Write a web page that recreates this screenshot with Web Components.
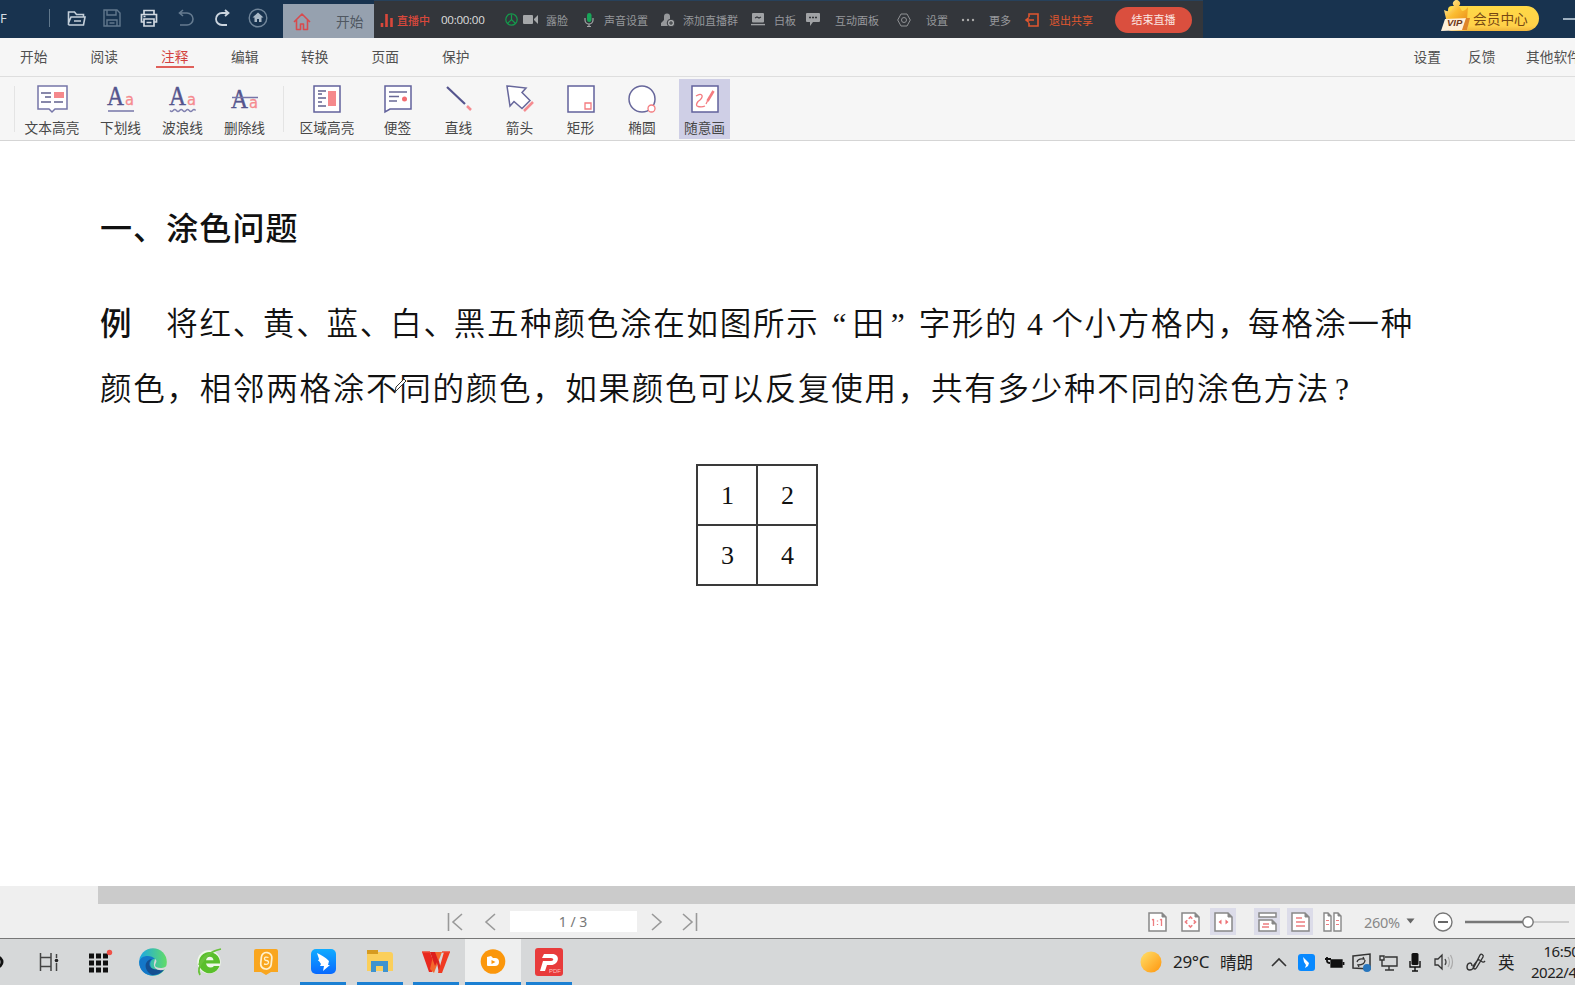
<!DOCTYPE html>
<html lang="zh-CN">
<head>
<meta charset="utf-8">
<title>PDF</title>
<style>
body{margin:0;width:1575px;height:985px;overflow:hidden;background:#fff;font-family:"Noto Sans CJK SC","Noto Sans",sans-serif}
</style>
</head>
<body>
<pdf-app></pdf-app>
<script>
const svg=(w,h,body,extra='')=>`<svg width="${w}" height="${h}" viewBox="0 0 ${w} ${h}" fill="none" ${extra}>${body}</svg>`;
const define=(name,css,html)=>customElements.define(name,class extends HTMLElement{
  constructor(){super();this.attachShadow({mode:'open'}).innerHTML=`<style>*{box-sizing:border-box}svg{display:block;flex:none;overflow:visible}${css}</style>${html}`;}
});

// A grid row whose columns begin at the listed stops.
customElements.define('track-row',class extends HTMLElement{
  constructor(){super();this.attachShadow({mode:'open'}).innerHTML='<style>:host{display:grid;align-items:center;white-space:nowrap;box-sizing:border-box}::slotted(*){min-width:0}</style><slot></slot>';}
  connectedCallback(){
    const s=this.getAttribute('stops').split(' ').map(Number);
    this.style.paddingLeft=s[0]+'px';
    this.style.gridTemplateColumns=s.slice(1).map((v,i)=>(v-s[i])+'px').join(' ')+' 1fr';
  }
});

define('live-bar',`
:host{display:block;width:829px;height:38px;background:#33363b;border-top:1px solid #27415b;color:#96989b;font-size:11px;line-height:16px;overflow:hidden}
track-row{height:37px}
.red{color:#d9483b;font-weight:500}.time{font:11.6px/16px "Open Sans","Noto Sans",sans-serif;color:#dedede;letter-spacing:-.3px}.exit{color:#e0562f}
.end{width:77px;height:26px;border-radius:13px;background:#da4f3e;color:#fbe6e2;text-align:center;line-height:25px}
`,`<track-row stops="6 23 67 131 149 172 210 230 286 309 377 400 432 461 523 552 587 615 651 675 741">
${svg(14,14,'<path d="M2 14v-4M6.5 14V1M11.5 14V5" stroke="#d9483b" stroke-width="2.6"/>')}
<span class="red">直播中</span><span class="time">00:00:00</span>
${svg(13,13,'<circle cx="6.5" cy="6.5" r="5.7" stroke="#159a4c" stroke-width="1.2"/><path d="M6.5 1.500v5M2.5 10.500l4-4 4 4" stroke="#159a4c" stroke-width="1.200"/>')}
${svg(16,11,'<rect y="1" width="10" height="9" rx="1" fill="#a5a7a9"/><path d="M11 5l4-4v9l-4-4z" fill="#a5a7a9"/>')}
<span>露脸</span>
${svg(10,14,'<rect x="3" y="0" width="4.5" height="9" rx="2.2" fill="#18a559"/><path d="M1 5v2a4 4 0 0 0 8 0V5M5 11v3M3 13.5h4" stroke="#a3a5a7" stroke-width="1.2"/>')}
<span>声音设置</span>
${svg(15,14,'<path d="M4 7V3.500a3 3 0 0 1 6 0V7L8 9v4H1v-3z" fill="#96989b"/><circle cx="11" cy="10" r="3.800" fill="#a5a7a9" stroke="#33363b"/><path d="M9 10h4M11 8v4" stroke="#33363b"/>')}
<span>添加直播群</span>
${svg(15,13,'<rect x="1" width="12" height="9.500" rx="1" fill="#a0a2a5"/><path d="M4 5l2-1 2 1 2-1" stroke="#33363b" stroke-width="1.200"/><path d="M0 11.600h14" stroke="#a0a2a5" stroke-width="1.400"/>')}
<span>白板</span>
${svg(14,13,'<path d="M1 0h12q1 0 1 1v7q0 1-1 1H7l-3 4V9H1q-1 0-1-1V1q0-1 1-1z" fill="#a0a2a5"/><path d="M3 4.500h2M6 4.500h2M9 4.500h2" stroke="#33363b" stroke-width="1.500"/>')}
<span>互动面板</span>
${svg(14,14,'<path d="M4 1h6l3.300 6L10 13H4L.700 7z" stroke="#909295" stroke-linejoin="round"/><circle cx="7" cy="7" r="2.500" stroke="#909295"/>')}
<span>设置</span>
${svg(14,4,'<circle cx="2" cy="2" r="1.200" fill="#aaa"/><circle cx="7" cy="2" r="1.200" fill="#aaa"/><circle cx="12" cy="2" r="1.200" fill="#aaa"/>')}
<span>更多</span>
${svg(14,14,'<path d="M4 4V1h9v12H4v-3M9 7H1M4 4.500L1 7l3 2.500" stroke="#e0562f" stroke-width="1.600"/>')}
<span class="exit">退出共享</span><div class="end">结束直播</div>
</track-row>`);

define('vip-badge',`
:host{display:flex;width:99px;height:34px;position:relative;align-items:flex-start}
.pill{margin:6px 0 0 7px;width:91px;height:25px;border-radius:4px 13px 13px 4px;background:linear-gradient(#ffd946,#ffd149 80%,#efb43b);color:#764713;font-size:13.700px;line-height:24px;padding-left:25px;white-space:nowrap}
.crown{position:absolute;left:0;top:0}
.tag{position:absolute;left:6px;top:17px;font:italic bold 9.500px/12px "Liberation Sans",sans-serif;color:#6d3517}
`,`<div class="pill">会员中心</div><svg class="crown" width="30" height="32" viewBox="0 0 30 32"><defs><linearGradient id="g" x2="1" y2="1"><stop stop-color="#fff4bd"/><stop offset=".5" stop-color="#fbbd32"/><stop offset="1" stop-color="#e98b18"/></linearGradient></defs><path d="M3 10q4 2 7 1l3-5a3.500 3.500 0 1 1 5 0l3 5q3 0 6-4l-1 13-2 3H6z" fill="url(#g)"/><path d="M4 19l24-1-2 12-26 1z" fill="#fff0d8"/><path d="M25 18h4l-3 12h-5z" fill="#df8428"/></svg><span class="tag">VIP</span>`);

define('title-bar',`
:host{display:grid;grid-template-columns:283px 91px 829px 238px 99px 35px;height:38px;background:#18334f;overflow:hidden;align-items:start}
.quick{height:36px}.f{font:13px/16px "Noto Sans",sans-serif;color:#d7dee5}
.tab{display:flex;align-items:center;height:34px;margin-top:4px;background:#96a1af;padding-left:10px;color:#505862;font-size:13.700px;line-height:18px;gap:25px;white-space:nowrap}
.min{width:12px;height:1.500px;background:#9eb0bf;margin:18px 0 0 23px}
`,`<track-row class="quick" stops="0 49 67 103 140 178 214 248">
<span class="f">F</span>${svg(1,18,'<path d="M.500 0v18" stroke="#60788c"/>')}
${svg(19,18,'<path d="M1.500 16V3h6l2 2.500h7V8M1.500 16h15L18 8H4L1.500 14M7 12h7" stroke="#c3cfda" stroke-width="1.600"/>')}
${svg(18,18,'<path d="M1 1h13l3 3v13H1zM4 1v5h9V1M4 17v-6h10v6M6.500 14h5" stroke="#61788d" stroke-width="1.400"/>')}
${svg(18,18,'<path d="M4 5V1.500h10V5M4 13H1.500V5.500h15V13H14M4 10h10v7H4zM6.500 13.500h5M3.500 7.500h2" stroke="#d1d9e1" stroke-width="1.700"/>')}
${svg(17,18,'<path d="M5 1L1.500 4 5 7M2 4h7a5.500 5.500 0 0 1 0 12H2" stroke="#657b90" stroke-width="1.600"/>')}
${svg(17,18,'<path d="M11 1l3.500 3L11 7M14 4H8a5.500 5.500 0 0 0 0 12h5" stroke="#cbd5df" stroke-width="1.800"/>')}
${svg(20,20,'<circle cx="10" cy="10" r="8.800" stroke="#71869a" stroke-width="1.400"/><path d="M10 4.500L4.500 9.500h2V14h2.500v-3h2v3h2.500V9.500h2z" fill="#a9b8c6"/>')}
</track-row>
<div class="tab">${svg(18,19,'<path d="M1 10l8-8 8 8M3.500 8v9.500h4V12h3v5.500h4V8" stroke="#d84a4d" stroke-width="1.600" stroke-linejoin="round"/>')}<span>开始</span></div>
<live-bar></live-bar><i></i><vip-badge></vip-badge><div class="min"></div>`);

define('menu-bar',`
:host{display:block;height:39px;background:#f6f6f6;border-bottom:1px solid #dedede;color:#505050;font-size:13.700px;line-height:20px;overflow:hidden}
track-row{height:36px}
.on{color:#d34240;width:38px;padding-left:5px;border-bottom:2px solid #e0605a;line-height:19px;margin-top:2px}
`,`<track-row stops="20 90.500 156 231 301 371.500 442 1413.500 1468 1526"><span>开始</span><span>阅读</span><span class="on">注释</span><span>编辑</span><span>转换</span><span>页面</span><span>保护</span><span>设置</span><span>反馈</span><span>其他软件</span></track-row>`);

define('tool-button',`
:host{display:flex;flex-direction:column;align-items:center;width:51px;height:60px;padding-top:6px;box-sizing:border-box;font-size:13.700px;line-height:18px;color:#474747}
:host([active]){background:#cfcfe6}
:host([wide]){width:60px}
.i{height:33px;display:flex;align-items:flex-start}
`,`<div class="i"><slot name="icon"></slot></div><slot></slot>`);

define('tool-ribbon',`
:host{display:block;height:64px;box-sizing:border-box;background:#f6f6f6;border-bottom:1.500px solid #d5d5d5;overflow:hidden}
track-row{height:62px;padding-top:2px}.sep{height:46px;border-left:1px solid #e4e4e4}
.a{font-family:"Liberation Serif",serif;font-size:28px;fill:#55558d;stroke:#55558d;stroke-width:.4px}.b{font-family:"DejaVu Sans",sans-serif;font-size:16px;fill:#f58b90;stroke:#f58b90;stroke-width:.3px}
`,`<track-row stops="14 22 95 157 219 283 297 372 433 494 555 616.500 679">
<div class="sep"></div>
<tool-button wide>${svg(31,28,'<path d="M1 1h29v23H18l-3 3-3-3H1z" fill="#fff" stroke="#7676a8" stroke-width="1.500"/><path d="M4 8h10M8 12h6M4 17h10M17 17h9" stroke="#62628f" stroke-width="1.300"/><path d="M17 7h10v6H17z" fill="#f5898c"/>','slot="icon"')}文本高亮</tool-button>
<tool-button>${svg(28,28,'<text class="a" x="0" y="20" textLength="17" lengthAdjust="spacingAndGlyphs">A</text><text class="b" x="18" y="20" textLength="9" lengthAdjust="spacingAndGlyphs">a</text><path d="M1 26h26" stroke="#7676a8" stroke-width="1.500"/>','slot="icon"')}下划线</tool-button>
<tool-button>${svg(28,28,'<text class="a" x="0" y="20" textLength="17" lengthAdjust="spacingAndGlyphs">A</text><text class="b" x="18" y="20" textLength="9" lengthAdjust="spacingAndGlyphs">a</text><path d="M1 25.500q1.600 2 3.200 0t3.200 0 3.200 0 3.200 0 3.200 0 3.200 0 3.200 0 3.200 0" stroke="#8282b0" stroke-width="1.300"/>','slot="icon"')}波浪线</tool-button>
<tool-button>${svg(28,28,'<text class="a" x="0" y="23" textLength="17" lengthAdjust="spacingAndGlyphs">A</text><text class="b" x="18" y="23" textLength="9" lengthAdjust="spacingAndGlyphs">a</text><path d="M1 12.500h26" stroke="#7575a8" stroke-width="1.500"/>','slot="icon"')}删除线</tool-button>
<div class="sep"></div>
<tool-button wide>${svg(28,28,'<path d="M1 1h26v26H1z" fill="#fff" stroke="#62629c" stroke-width="1.500"/><path d="M5 6h8M5 9h4M5 13h8M5 17h4M5 21h8" stroke="#62628f" stroke-width="1.300"/><path d="M15 6h8v15h-8z" fill="#f5898c"/>','slot="icon"')}区域高亮</tool-button>
<tool-button>${svg(28,28,'<path d="M1 1h26v23H6l-5 3z" fill="#fff" stroke="#62629c" stroke-width="1.500"/><path d="M5 7h18M5 11.500h10M5 16h8" stroke="#696996" stroke-width="1.400"/><circle cx="20.500" cy="14" r="2.500" fill="#f36c70"/>','slot="icon"')}便签</tool-button>
<tool-button>${svg(28,28,'<path d="M2 2l18 17" stroke="#55558e" stroke-width="2.200"/><path d="M22 21l4 4" stroke="#f58b90" stroke-width="2.500"/>','slot="icon"')}直线</tool-button>
<tool-button>${svg(28,28,'<path d="M1 1l19 2-4 4.500 8 8-8 8-8-7-4 4.500z" fill="#fff" stroke="#67679b" stroke-width="1.500"/><path d="M18 26l9-9" stroke="#f58b90" stroke-width="2.500"/>','slot="icon"')}箭头</tool-button>
<tool-button>${svg(28,28,'<path d="M1 1h26v26H1z" fill="#fff" stroke="#62629c" stroke-width="1.500"/><path d="M18 18h6v6h-6z" stroke="#f47b7f" stroke-width="1.300"/>','slot="icon"')}矩形</tool-button>
<tool-button>${svg(28,28,'<circle cx="14" cy="14" r="13" fill="#fff" stroke="#67679b" stroke-width="1.500"/><circle cx="23.500" cy="23.500" r="3.500" fill="#fff" stroke="#f47b7f" stroke-width="1.300"/>','slot="icon"')}椭圆</tool-button>
<tool-button active>${svg(28,28,'<path d="M1 1h26v26H1z" fill="#fff" stroke="#62629c" stroke-width="1.500"/><path d="M5 11q5-3 6-.500t-4 6q-3 4 0 5 4 1 7-.500" stroke="#f47b80" stroke-width="1.300"/><path d="M22.500 6l-6 10" stroke="#f47b80" stroke-width="2.600"/><path d="M16.500 16l-1.500 3" stroke="#f47b80" stroke-width="1.200"/>','slot="icon"')}随意画</tool-button>
</track-row>`);

define('color-grid',`
:host{display:grid;grid-template:58px 58px/58px 58px;gap:2px;width:122px;height:122px;padding:2px;box-sizing:border-box;background:#3a3a3a;margin:45px 0 0 696px;font:26px/1 "Liberation Serif",serif;color:#111}
div{background:#fff;display:grid;place-items:center;padding:3px 0 0 1px}
`,`<div>1</div><div>2</div><div>3</div><div>4</div>`);

define('doc-page',`
:host{display:block;height:745px;box-sizing:border-box;background:#fff;padding-top:52px;color:#111;overflow:hidden;white-space:nowrap}
h1{margin:0 0 29.500px 100px;font-size:32px;line-height:66px;font-weight:500;letter-spacing:1.100px}
p{margin:0 0 0 100px;font-size:31.500px;line-height:65px;font-weight:350;letter-spacing:1.740px;height:65px}
b{font-weight:500;margin-right:33px}.c{letter-spacing:-1.200px}
.q{display:inline-block;width:33px;font-family:"Liberation Serif",serif;letter-spacing:0;line-height:1}
.l{text-align:right;padding-right:6px}.r{padding-left:5px}.m{text-align:center}
.pen{position:relative}.pen svg{position:absolute;left:-7px;top:14px}
`,`<h1>一、涂色问题</h1>
<p><b>例</b>将红<span class="c">、</span>黄<span class="c">、</span>蓝<span class="c">、</span>白<span class="c">、</span>黑五种颜色涂在如图所示<span class="q l">“</span>田<span class="q r">”</span>字形的<span class="q m">4</span>个小方格内<span class="c">&#xff0c;</span>每格涂一种</p>
<p>颜色&#xff0c;相邻两格涂不<span class="pen">${svg(16,18,'<path d="M3 15l1-5 8-8 2 2-8 8z" fill="#fff" stroke="#333"/>')}</span>同的颜色&#xff0c;如果颜色可以反复使用&#xff0c;共有多少种不同的涂色方法<span class="q r">?</span></p>
<color-grid></color-grid>`);

define('page-nav',`
:host{display:block;height:53px;box-sizing:border-box;background:#efefef;border-bottom:1.500px solid #777;overflow:hidden}
.scroll{height:18px;margin-left:98px;background:#cbcbcb}
track-row{height:34px;padding-top:1px}
.page{width:127px;height:21px;background:#fff;text-align:center;font:14px/21px "Noto Sans",sans-serif;color:#777}
.on{width:26px;height:27px;background:#dcdce9;display:grid;place-items:center}
.zoom{font:14.500px/20px "Noto Sans",sans-serif;color:#888;letter-spacing:-.3px}
`,`<div class="scroll"></div>
<track-row stops="447 483.500 509.500 651 682 1148 1181 1210 1254 1287 1323 1364 1406 1433 1465">
${svg(16,18,'<path d="M1.500 0v18M15 1L6 9l9 8" stroke="#999" stroke-width="1.600"/>')}
${svg(12,18,'<path d="M11 1L2 9l9 8" stroke="#999" stroke-width="1.600"/>')}
<div class="page">1 / 3</div>
${svg(12,18,'<path d="M1 1l9 8-9 8" stroke="#999" stroke-width="1.600"/>')}
${svg(16,18,'<path d="M1 1l9 8-9 8M14.500 0v18" stroke="#999" stroke-width="1.600"/>')}
${svg(19,20,'<path d="M1 1h13l4 4v14H1z" fill="#fff" stroke="#888" stroke-width="1.500"/><path d="M14 1v4h4" fill="#888" stroke="#888"/><path d="M5.500 7v7M13.500 7v7M4 8l1.500-1M12 8l1.500-1M9.500 8.500v1M9.500 12v1" stroke="#ed7d80" stroke-width="1.300"/>')}
${svg(19,20,'<path d="M1 1h13l4 4v14H1z" fill="#fff" stroke="#888" stroke-width="1.500"/><path d="M14 1v4h4" fill="#888" stroke="#888"/><path d="M9.500 5l5 5-5 5-5-5z" stroke="#ed7d80" stroke-width="1.700" stroke-dasharray="2.500 2.070 2.500 0"/>')}
<div class="on">${svg(19,20,'<path d="M1 1h13l4 4v14H1z" fill="#fff" stroke="#888" stroke-width="1.500"/><path d="M14 1v4h4" fill="#888" stroke="#888"/><path d="M7.500 7.500L4.500 10l3 2.500zM11.500 7.500l3 2.500-3 2.500z" fill="#ed7075"/>')}</div>
<div class="on">${svg(19,20,'<path d="M1 1h17v4H1zM1 8h13l4 4v7H1z" fill="#fff" stroke="#888" stroke-width="1.500"/><path d="M14 8v4h4" fill="#888" stroke="#888"/><path d="M5 12h6M4 15h7" stroke="#ed7d80" stroke-width="1.300"/>')}</div>
<div class="on">${svg(19,20,'<path d="M1 1h13l4 4v14H1z" fill="#fff" stroke="#888" stroke-width="1.500"/><path d="M14 1v4h4" fill="#888" stroke="#888"/><path d="M5 6h6M5 10h9M5 14h9" stroke="#ed7d80" stroke-width="1.400"/>')}</div>
${svg(19,20,'<path d="M1 1h4l3 3v15H1zM11 1h4l3 3v15h-7z" fill="#fff" stroke="#888" stroke-width="1.400"/><path d="M5 1v3h3M15 1v3h3" fill="#888" stroke="#888"/><path d="M3 8.500h3M3 12.500h3M13 8.500h3M13 12.500h3" stroke="#ed7d80" stroke-width="1.200"/>')}
<span class="zoom">260%</span>
${svg(10,8,'<path d="M.500 0.500h8L4.500 5.500z" fill="#666"/>')}
${svg(20,20,'<circle cx="10" cy="10" r="9" fill="#fff" stroke="#777" stroke-width="1.400"/><path d="M5 10h10" stroke="#555" stroke-width="1.800"/>')}
${svg(105,14,'<path d="M0 7h62" stroke="#777" stroke-width="2.500"/><path d="M62 7h42" stroke="#ccc" stroke-width="2"/><circle cx="63" cy="7" r="5.200" fill="#fff" stroke="#777" stroke-width="1.400"/>')}
</track-row>`);

define('app-slot',`
:host{display:flex;flex-direction:column;justify-content:space-between;align-items:center;width:46px;height:46px;box-sizing:border-box;border-bottom:3px solid transparent;padding-top:9px}
:host([run]){border-color:#1b80d3}:host([active]){width:56px;background:#eeefef}
`,`<slot></slot>`);

define('task-bar',`
:host{display:block;height:46px;background:#d6d8d9;color:#222;overflow:hidden}
.bar{height:46px}
.t{font:17px/22px "Noto Sans","Noto Sans CJK SC",sans-serif;letter-spacing:-.3px}.cn{font-size:16.500px;line-height:22px}
.clock{font:15px/21px "Noto Sans",sans-serif;letter-spacing:-.5px;display:grid;padding-bottom:1px}
.clock span:first-child{padding-left:12.500px}
`,`<track-row class="bar" stops="0 39 88 130 186 243 300 356.500 413 465 526 1140 1173 1220 1271 1298 1325 1352 1379 1409 1434 1466 1498 1531">
${svg(5,16,'<circle cx="-3" cy="8" r="5" stroke="#111" stroke-width="3"/>')}
${svg(20,19,'<path d="M1.500 0v18M12 0v18M1.500 4.500H12M1.500 13.500H12M17.500 1v4M17.500 10v8" stroke="#444" stroke-width="1.500"/><circle cx="17.500" cy="7.500" r="1.800" fill="#222"/>')}
${svg(25,25,'<path d="M1 6h19M1 13h19M1 20h19" stroke="#111" stroke-width="5" stroke-dasharray="5 2"/><circle cx="21.500" cy="2.500" r="2.700" fill="#ef5148"/>')}
<app-slot>${svg(28,28,'<defs><linearGradient id="e" x2="1"><stop stop-color="#1aa7e5"/><stop offset="1" stop-color="#62dc67"/></linearGradient></defs><circle cx="14" cy="14" r="13.800" fill="url(#e)"/><path d="M.200 14C1 7 12 6 16 11c-5-1-8 9 1 12 4 1 8 0 9-3C20 32 0 29 .200 14z" fill="#1477c8"/><path d="M13 11c-7 6 0 14 13 9-3 5-8 7-13 7-9-5-8-15 0-16z" fill="#144f91"/><path d="M16 11c4 3-2 5 1 8 4 2 11 1 11-3l-1 5c-7 3-13 0-12-6z" fill="#d6d8d9"/>')}</app-slot>
<app-slot>${svg(28,28,'<circle cx="14" cy="14" r="11.700" fill="#eff8e9"/><path d="M25 15.500H11q1 4 4.500 4 2 0 3.500-1.500h5.500A10.600 10.600 0 1 1 25 15.500z" fill="#5abf2c"/><path d="M11 12.200h7.500c-.5-4.500-7-4.500-7.500 0z" fill="#eff8e9"/><path d="M5 27C0 18 14 3 26 1c-6 1-19 6-22 16" stroke="#68c33a" stroke-width="1.700"/>')}</app-slot>
<app-slot>${svg(26,28,'<path d="M1 3q0-2 2-2h20q2 0 2 2v21h-7l-5 3-5-3H1z" fill="#f9a61f"/><rect x="8" y="4.500" width="10.500" height="16.500" rx="5" stroke="#fff1cf" stroke-width="1.700" transform="rotate(6 13 13)"/><path d="M15.500 9.500c-5-2-5 3-2 3s3 5-2.500 3.500" stroke="#fff1cf" stroke-width="1.300"/>')}</app-slot>
<app-slot run>${svg(25,28,'<defs><linearGradient id="d" x2="0" y2="1"><stop stop-color="#10acff"/><stop offset="1" stop-color="#0869ff"/></linearGradient></defs><rect y="1" width="25" height="25" rx="5" fill="url(#d)"/><path d="M6 5c4 2 8 4 12 8l-1 4h2l-7 6 1-5H9l1-2-2-3H7l1-2z" fill="#fff"/>')}</app-slot>
<app-slot run>${svg(27,28,'<path d="M1 4h23q3 0 3 3v16H1z" fill="#fbcf5b"/><path d="M1 2h11v4H1z" fill="#d69b20"/><path d="M5 13h17v11h-5v-6h-7v6H5z" fill="#3e93cf"/>')}</app-slot>
<app-slot run>${svg(28,28,'<path d="M0 4h8l5 14-3 6H7z" fill="#e8281f"/><path d="M12 4h8l-8 21-4-4z" fill="#f4672c"/><path d="M8 4h5l3 8-3 6z" fill="#dc1f1d"/><path d="M14 10l3 3 2 8-2 4z" fill="#d92520"/><path d="M22 4h6l-8 21h-4z" fill="#f03a22"/><path d="M0 4h8M20 4h8" stroke="#f04a35" stroke-width="1.500"/>')}</app-slot>
<app-slot run active>${svg(26,28,'<circle cx="13" cy="13.500" r="12.300" fill="#fb970c"/><path d="M7 9l4-1 2 2h2q4 0 4 4t-4 4H8q-1 0-1-1z" fill="#fff"/><path d="M11.500 12v4l4-2z" fill="#fb970c"/>')}</app-slot>
<app-slot run>${svg(28,28,'<rect width="28" height="28" rx="3" fill="#e83b3b"/><path d="M9 6h8c9 0 7 11-1 11h-4l-2 6H5l3-10h8c3 0 3-3 0-3H7z" fill="#fff"/><text x="14" y="25" font-family="Liberation Sans" font-size="6" fill="#ffc1bd">PDF</text>')}</app-slot>
${svg(22,22,'<defs><linearGradient id="s" x2="1" y2="1"><stop stop-color="#ffe06a"/><stop offset="1" stop-color="#ff950d"/></linearGradient></defs><circle cx="11" cy="11" r="10.500" fill="url(#s)"/>')}
<span class="t">29°C</span><span class="cn">晴朗</span>
${svg(17,12,'<path d="M1 10l7-7 7 7" stroke="#333" stroke-width="1.600"/>')}
${svg(17,17,'<rect width="17" height="17" rx="3" fill="#0889ff"/><path d="M5 3l6 6-1 3-3 2 1-3-2-3z" fill="#fff"/>')}
${svg(20,13,'<path d="M6 4h11v7H6z" fill="#111" stroke="#111" stroke-width="1.300"/><path d="M18.500 6v3M0 3h6M2 1v4q0 2 3 2" stroke="#111" stroke-width="1.800"/>')}
${svg(20,19,'<path d="M1 3l17-2v15L1 15z" stroke="#333" stroke-width="1.500"/><path d="M5 9q1-4 7-3l-1-2M13 7q0 5-7 5l1 2" stroke="#333" stroke-width="1.300"/><circle cx="15" cy="15" r="4" fill="#2876bd"/>')}
${svg(20,17,'<path d="M6 3h12v9H3V9M10 12v4M6 16h9M1 2h4v4H1zM3 6v4" stroke="#333" stroke-width="1.400"/>')}
${svg(12,19,'<rect x="2.500" width="7" height="12" rx="1.500" fill="#111"/><path d="M1 8v6h10V8M6 14v4M3 18h6" stroke="#111" stroke-width="1.400"/>')}
${svg(20,18,'<path d="M1 6h3l4-4v14l-4-4H1z" stroke="#333" stroke-width="1.300"/><path d="M11 6q2 3 0 6" stroke="#444" stroke-width="1.300"/><path d="M14 4q3 5 0 10M16.500 2q4 7 0 14" stroke="#aaa" stroke-width="1.200"/>')}
${svg(20,19,'<path d="M6 13c0-5-5-3-5 1s5 4 7 0L14 2c1-2 4 0 3 2l-6 10c-2 4-5 1-3-2l3-4c3-4 5 4 8 0" stroke="#333" stroke-width="1.400"/>')}
<span class="cn">英</span><div class="clock"><span>16:50</span><span>2022/4</span></div>
</track-row>`);

define('pdf-app',`:host{display:flex;flex-direction:column;width:1575px;height:985px;overflow:hidden}title-bar,menu-bar,tool-ribbon,page-nav,task-bar,doc-page{flex:none}`,
`<title-bar></title-bar><menu-bar></menu-bar><tool-ribbon></tool-ribbon><doc-page></doc-page><page-nav></page-nav><task-bar></task-bar>`);
</script>
</body>
</html>
